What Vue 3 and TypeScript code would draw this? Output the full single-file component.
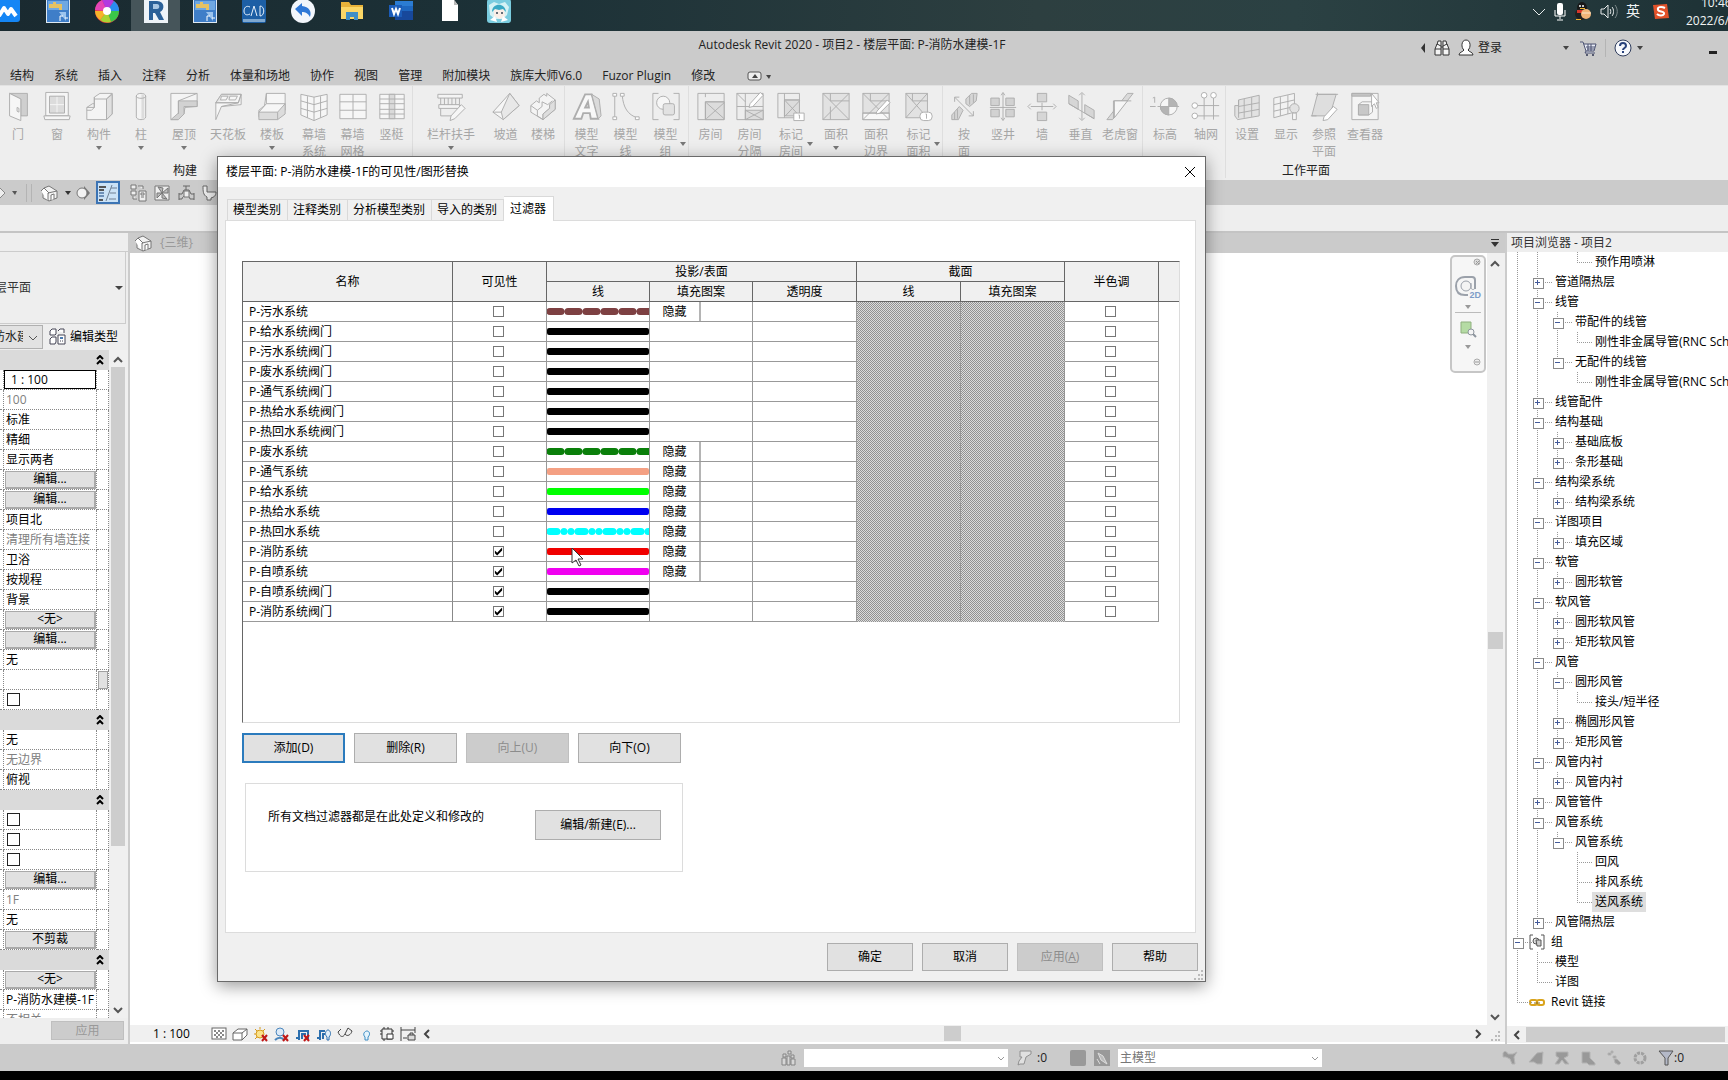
<script setup lang="ts">
import { ref } from 'vue'

interface Tool {
  icon: string
  w: number
  label: string[]
  drop?: 'below' | 'side'
}
interface Group {
  title?: string
  tools: Tool[]
}
interface Filter {
  name: string
  on: boolean
  color: string
  dash?: string
  hidden?: boolean
}
interface Prop {
  kind: 'input' | 'text' | 'muted' | 'button' | 'check' | 'more' | 'group'
  value?: string
}
interface Node {
  cells: string
  text: string
  icon?: 'group' | 'link'
  selected?: boolean
}

const menu = ['结构', '系统', '插入', '注释', '分析', '体量和场地', '协作', '视图', '管理', '附加模块', '族库大师V6.0', 'Fuzor Plugin', '修改']

const art: Record<string, string> = {
  door: '<path d="M7 2h19v24h-7V8z" fill="#cfcfcf"/><path d="M7 2l12 6v23L7 26z" fill="#f6f6f6"/><path d="M15 17v4l2 1v-4z"/>',
  window: '<path d="M4 1h24v25H4z" fill="#f6f6f6"/><path d="M2 26h28l-1 4H3z" fill="#f6f6f6"/><path d="M8 5h16v18H8z" fill="#dcdcdc" stroke="none"/><path d="M16 5v18M8 14h16" stroke="#f6f6f6"/><path d="M8 5h16v18H8z"/>',
  component: '<path d="M11 6l6-4h13v22l-6 6H3V17h8z" fill="#f4f4f4"/><path d="M3 17l6-4h2M11 6v11l-3 3H3M24 30V8l6-6M11 8h13" /><path d="M24 8l6-5v21l-6 6z" fill="#e0e0e0"/>',
  column: '<path d="M11 5c0-4 10-4 10 0v22c0 4-10 4-10 0z" fill="#f4f4f4"/><path d="M18 3v26" stroke="#dcdcdc" stroke-width="3"/><path d="M11 5c0 3 10 3 10 0"/>',
  roof: '<path d="M2 2h28v14l-13 1-1 7-7 6H2z" fill="#f4f4f4"/><path d="M2 30l8-7V10h20l0 6H16v8l-6 6z" fill="#d2d2d2"/><path d="M10 10l20-8M10 10v14"/>',
  ceiling: '<path d="M9 3h21v11L9 16l-6 14V12z" fill="#f6f6f6"/><path d="M3 12l6-9h21l-3 9zM3 12h24l3-9M9 16l18-4" fill="#e6e6e6"/><path d="M9 5h7l-2 4H8zM18 5h8l-2 4h-7z" fill="#f6f6f6"/>',
  floor: '<path d="M10 2h20v18l-8 7H2l0-7 6-5z" fill="#f6f6f6"/><path d="M2 22h20l8-9v11l-8 6H2z" fill="#dcdcdc"/><path d="M2 22l8-9h20M10 2v11M22 22v8"/>',
  curtain: '<path d="M2 3l14 3 14-3v22l-14 6L2 25z" fill="#f6f6f6"/><path d="M9 5v23M23 5v23M16 6v25M2 10l14 4 14-4M2 18l14 4 14-4"/>',
  grid: '<path d="M2 3h28v26H2z" fill="#f6f6f6"/><path d="M16 3v26M2 11h28M2 20h28"/>',
  mullion: '<path d="M3 3h26v26H3z" fill="#f6f6f6"/><path d="M13 3h6v26h-6z" fill="#dadada"/><path d="M3 8h26M3 13h26M3 19h26M3 24h26"/>',
  railing: '<path d="M2 3h26v4H2zM3 14h22v4H3z" fill="#f4f4f4"/><path d="M5 7v7M9 7v7M13 7v7M17 7v7M21 7v7M25 7v7M5 18v8h14"/><path d="M16 26l11-12 4 4-11 11-5 2z" fill="#f6f6f6"/>',
  ramp: '<path d="M2 22L20 2l10 13-17 15z" fill="#f6f6f6"/><path d="M20 2l10 13-17 15-2-8z" fill="#e8e8e8"/><path d="M2 22l9 0"/>',
  stair: '<path d="M3 15l6-5 3 2 0-5 5-4 3 2 0-3 9 7v10L16 30 3 22z" fill="#f4f4f4"/><path d="M3 15l7 5 5-4 0-5 6 3 5-4M10 20v6l6 4 0-6 7-6v-4" /><path d="M16 24l7-6v-4l6-5v10L16 30z" fill="#dedede"/>',
  text: '<path d="M2 29L14 3h7l7 26h-8l-1-6h-7l-2 6zM14 17h4l-1-6z" fill="#f8f8f8" stroke-width="2"/><path d="M21 3l8 5 2 18-3 3z" fill="#dadada"/>',
  line: '<path d="M4 4v24M12 4c1 13 6 21 16 24"/><path d="M2 2h4v3H2zM2 27h4v3H2zM10 2h4v3h-4zM26 27h4v3h-4z" fill="#fff"/>',
  group: '<path d="M8 2H2v28h6M24 2h6v28h-6"/><circle cx="13" cy="12" r="7" fill="#f6f6f6"/><rect x="13" y="13" width="12" height="12" rx="2" fill="#e2e2e2"/>',
  room: '<path d="M2 2h28v28H2z" fill="#ededed"/><path d="M10 11h20v19H10z" fill="#dcdcdc"/><path d="M10 2v4M10 11v19M10 11h20M11 12l19 17M30 12L11 29"/>',
  roomsep: '<path d="M2 2h28v28H2z" fill="#ededed"/><path d="M11 20h19v10H11z" fill="#dcdcdc"/><path d="M11 2v28M2 16h28M11 20l19 10M30 20L11 30M2 2l9 9"/><path d="M16 13L27 1l3 3-11 12-4 1z" fill="#fff"/>',
  tagroom: '<path d="M2 2h23v26H2z" fill="#ededed"/><path d="M9 9h16v17H9z" fill="#dcdcdc"/><path d="M9 2v26M9 9h16M10 10l15 16M25 10L10 26"/><path d="M19 23h11v8H19z" fill="#fff"/><path d="M24 25h1v4"/>',
  area: '<path d="M2 2h28v28H2z" fill="#e2e2e2"/><path d="M2 2l28 28M30 2L2 30M10 2v8h20M10 16v14"/>',
  areaedge: '<path d="M2 2h28v28H2z" fill="#e2e2e2"/><path d="M2 23h28v7H2z" fill="#f8f8f8"/><path d="M2 2l28 28M30 2L2 30M10 2v8h20M2 23h28"/><path d="M17 21L28 9l3 3-11 11-4 1z" fill="#fff"/>',
  tagarea: '<path d="M2 2h23v26H2z" fill="#e2e2e2"/><path d="M2 2l23 26M25 2L2 28M9 2v8h16"/><rect x="17" y="22" width="13" height="9" rx="4" fill="#fff"/><path d="M23 24h1v5"/>',
  face: '<path d="M3 25l8-9 4 4-5 10H3zM18 8l6-6h6l-1 8-7 6-4-3z" fill="#d6d6d6"/><path d="M6 6l20 20M6 6v5M6 6h5M26 26v-5M26 26h-5M6 22v8M9 19v10M22 4v10M26 3v9"/>',
  shaft: '<path d="M3 7h9v8H3zM19 7h9v8h-9zM3 19h9v8H3zM19 19h9v8h-9z" fill="#d2d2d2"/><path d="M16 2v28M2 17h28M14 4l2-3 2 3M14 28l2 3 2-3"/>',
  wall: '<path d="M11 2h10v9H11zM11 22h10v9H11z" fill="#d6d6d6"/><path d="M4 16h24M4 13l-3 3 3 3M28 13l3 3-3 3M16 12v8"/>',
  vertical: '<path d="M3 4l10 6v9L3 13zM20 14l10 6v9l-10-6z" fill="#d6d6d6"/><path d="M17 2v28M14 4l3-3 3 3M14 28l3 3 3-3M3 13l27 16"/>',
  dormer: '<path d="M2 30h6L30 2h-6z" fill="#dadada"/><path d="M9 29V10h19" /><path d="M10 10h14L10 28z" fill="#f6f6f6"/>',
  level: '<path d="M0 16h6M8 16h3M28 16h3M3 7l2-1v6"/><circle cx="20" cy="16" r="9" fill="#f6f6f6"/><path d="M20 7a9 9 0 0 1 9 9H11a9 9 0 0 0 9 9z" fill="#b4b4b4"/>',
  axis: '<path d="M14 6v24M24 6v24M6 15h24M6 26h24"/><circle cx="14" cy="4" r="3" fill="#fff"/><circle cx="24" cy="4" r="3" fill="#fff"/><circle cx="4" cy="15" r="3" fill="#fff"/><circle cx="4" cy="26" r="3" fill="#fff"/>',
  set: '<path d="M7 9l22-5v22L6 30l-3-4V15h4z" fill="#e2e2e2"/><path d="M13 8v20M21 6v21M7 16l22-4M7 23l22-4M7 9v19"/>',
  show: '<path d="M3 7l22-5v20L3 28z" fill="#f2f2f2"/><path d="M10 6v20M18 4v20M3 14l22-5M3 21l22-5"/><circle cx="25" cy="18" r="5" fill="#e2e2e2"/><path d="M23 23h4v7h-4z" fill="#f6f6f6"/>',
  refplane: '<path d="M9 3h20l-7 23H3z" fill="#dedede"/><path d="M7 3h24M9 1v4M2 26h6"/><path d="M16 27l10-11 4 3-10 11-5 1z" fill="#fff"/>',
  viewer: '<path d="M2 2h28v28H2z" fill="#f4f4f4"/><path d="M2 2h20v3H2z" fill="#c4c4c4"/><path d="M9 14l4-3h11v11l-4 3H9z" fill="#f6f6f6"/><path d="M9 14h11v11H9z" fill="#c8c8c8"/><path d="M23 2v14l3-3 2 5 2-1-2-5h3z" fill="#fff"/>',
}

const groups: Group[] = [
  {
    title: '构建',
    tools: [
      { icon: 'door', w: 36, label: ['门'] },
      { icon: 'window', w: 42, label: ['窗'] },
      { icon: 'component', w: 42, label: ['构件'], drop: 'below' },
      { icon: 'column', w: 42, label: ['柱'], drop: 'below' },
      { icon: 'roof', w: 44, label: ['屋顶'], drop: 'below' },
      { icon: 'ceiling', w: 44, label: ['天花板'] },
      { icon: 'floor', w: 44, label: ['楼板'], drop: 'below' },
      { icon: 'curtain', w: 40, label: ['幕墙', '系统'] },
      { icon: 'grid', w: 37, label: ['幕墙', '网格'] },
      { icon: 'mullion', w: 41, label: ['竖梃'] },
    ],
  },
  {
    tools: [
      { icon: 'railing', w: 76, label: ['栏杆扶手'], drop: 'below' },
      { icon: 'ramp', w: 33, label: ['坡道'] },
      { icon: 'stair', w: 42, label: ['楼梯'] },
    ],
  },
  {
    tools: [
      { icon: 'text', w: 43, label: ['模型', '文字'] },
      { icon: 'line', w: 35, label: ['模型', '线'] },
      { icon: 'group', w: 45, label: ['模型', '组'], drop: 'side' },
    ],
  },
  {
    tools: [
      { icon: 'room', w: 43, label: ['房间'] },
      { icon: 'roomsep', w: 35, label: ['房间', '分隔'] },
      { icon: 'tagroom', w: 48, label: ['标记', '房间'], drop: 'side' },
      { icon: 'area', w: 42, label: ['面积'], drop: 'below' },
      { icon: 'areaedge', w: 38, label: ['面积', '边界'] },
      { icon: 'tagarea', w: 47, label: ['标记', '面积'], drop: 'side' },
    ],
  },
  {
    tools: [
      { icon: 'face', w: 42, label: ['按', '面'] },
      { icon: 'shaft', w: 36, label: ['竖井'] },
      { icon: 'wall', w: 42, label: ['墙'] },
      { icon: 'vertical', w: 35, label: ['垂直'] },
      { icon: 'dormer', w: 44, label: ['老虎窗'] },
    ],
  },
  {
    tools: [
      { icon: 'level', w: 44, label: ['标高'] },
      { icon: 'axis', w: 38, label: ['轴网'] },
    ],
  },
  {
    title: '工作平面',
    tools: [
      { icon: 'set', w: 42, label: ['设置'] },
      { icon: 'show', w: 36, label: ['显示'] },
      { icon: 'refplane', w: 40, label: ['参照', '平面'] },
      { icon: 'viewer', w: 42, label: ['查看器'] },
    ],
  },
]

const props: Prop[] = [
  { kind: 'group' },
  { kind: 'input', value: '1 : 100' },
  { kind: 'muted', value: '100' },
  { kind: 'text', value: '标准' },
  { kind: 'text', value: '精细' },
  { kind: 'text', value: '显示两者' },
  { kind: 'button', value: '编辑...' },
  { kind: 'button', value: '编辑...' },
  { kind: 'text', value: '项目北' },
  { kind: 'muted', value: '清理所有墙连接' },
  { kind: 'text', value: '卫浴' },
  { kind: 'text', value: '按规程' },
  { kind: 'text', value: '背景' },
  { kind: 'button', value: '<无>' },
  { kind: 'button', value: '编辑...' },
  { kind: 'text', value: '无' },
  { kind: 'more' },
  { kind: 'check' },
  { kind: 'group' },
  { kind: 'text', value: '无' },
  { kind: 'muted', value: '无边界' },
  { kind: 'text', value: '俯视' },
  { kind: 'group' },
  { kind: 'check' },
  { kind: 'check' },
  { kind: 'check' },
  { kind: 'button', value: '编辑...' },
  { kind: 'muted', value: '1F' },
  { kind: 'text', value: '无' },
  { kind: 'button', value: '不剪裁' },
  { kind: 'group' },
  { kind: 'button', value: '<无>' },
  { kind: 'text', value: 'P-消防水建模-1F' },
  { kind: 'muted', value: '不相关' },
]

const LONG = '11 7'
const DASH_DOT = '7 7 0 7 0 7'
const filters = ref<Filter[]>([
  { name: 'P-污水系统', on: false, color: '#7d4042', dash: LONG, hidden: true },
  { name: 'P-给水系统阀门', on: false, color: '#000' },
  { name: 'P-污水系统阀门', on: false, color: '#000' },
  { name: 'P-废水系统阀门', on: false, color: '#000' },
  { name: 'P-通气系统阀门', on: false, color: '#000' },
  { name: 'P-热给水系统阀门', on: false, color: '#000' },
  { name: 'P-热回水系统阀门', on: false, color: '#000' },
  { name: 'P-废水系统', on: false, color: '#0a7f0a', dash: LONG, hidden: true },
  { name: 'P-通气系统', on: false, color: '#f4a083', hidden: true },
  { name: 'P-给水系统', on: false, color: '#0f0', hidden: true },
  { name: 'P-热给水系统', on: false, color: '#0000f0', hidden: true },
  { name: 'P-热回水系统', on: false, color: '#0ff', dash: DASH_DOT, hidden: true },
  { name: 'P-消防系统', on: true, color: '#f00000', hidden: true },
  { name: 'P-自喷系统', on: true, color: '#f000f0', hidden: true },
  { name: 'P-自喷系统阀门', on: true, color: '#000' },
  { name: 'P-消防系统阀门', on: true, color: '#000' },
])

// One character per 20px guide column:
// | line, T branch, L last branch, + - boxes, p m boxes on the last child
const tree: Node[] = [
  { cells: '|| L', text: '预作用喷淋' },
  { cells: '|+', text: '管道隔热层' },
  { cells: '|-', text: '线管' },
  { cells: '||-', text: '带配件的线管' },
  { cells: '|||L', text: '刚性非金属导管(RNC Sch' },
  { cells: '||m', text: '无配件的线管' },
  { cells: '|| L', text: '刚性非金属导管(RNC Sch' },
  { cells: '|+', text: '线管配件' },
  { cells: '|-', text: '结构基础' },
  { cells: '||+', text: '基础底板' },
  { cells: '||p', text: '条形基础' },
  { cells: '|-', text: '结构梁系统' },
  { cells: '||p', text: '结构梁系统' },
  { cells: '|-', text: '详图项目' },
  { cells: '||p', text: '填充区域' },
  { cells: '|-', text: '软管' },
  { cells: '||p', text: '圆形软管' },
  { cells: '|-', text: '软风管' },
  { cells: '||+', text: '圆形软风管' },
  { cells: '||p', text: '矩形软风管' },
  { cells: '|-', text: '风管' },
  { cells: '||-', text: '圆形风管' },
  { cells: '|||L', text: '接头/短半径' },
  { cells: '||+', text: '椭圆形风管' },
  { cells: '||p', text: '矩形风管' },
  { cells: '|-', text: '风管内衬' },
  { cells: '||p', text: '风管内衬' },
  { cells: '|+', text: '风管管件' },
  { cells: '|-', text: '风管系统' },
  { cells: '||m', text: '风管系统' },
  { cells: '|| T', text: '回风' },
  { cells: '|| T', text: '排风系统' },
  { cells: '|| L', text: '送风系统', selected: true },
  { cells: '|p', text: '风管隔热层' },
  { cells: '-', text: '组', icon: 'group' },
  { cells: '|T', text: '模型' },
  { cells: '|L', text: '详图' },
  { cells: 'L', text: 'Revit 链接', icon: 'link' },
]

const cellClass: Record<string, string> = {
  ' ': '', '|': 'v', T: 'v h', L: 'u h', '+': 'v h box plus', '-': 'v h box', p: 'u h box plus', m: 'u h box',
}

const redX = '<path d="M9 9l5 6M14 9l-5 6" stroke="#c01818" stroke-width="2"/>'
const viewIcons = [
  '<rect x="1" y="2" width="14" height="11" fill="#fff"/><path d="M3 4h2v2H3zM7 4h2v2H7zM11 4h2v2h-2zM5 6h2v2H5zM9 6h2v2H9zM3 8h2v2H3zM7 8h2v2H7zM11 8h2v2h-2zM5 10h2v2H5zM9 10h2v2H9z" fill="#888" stroke="none"/>',
  '<path d="M1 7l5-4h9v6l-5 5H1zM1 7h9v7M10 7l5-4" fill="#fff"/>',
  '<circle cx="7" cy="8" r="4" fill="#fbe38a" stroke="#d69a1c"/><path d="M7 1v2M1 8h2M2 3l2 2M12 3l-2 2M2 13l2-2" stroke="#d69a1c"/>' + redX,
  '<circle cx="6" cy="6" r="4" fill="#dceaf8" stroke="#4b86bd"/><path d="M1 14c3-3 7-3 9 0" stroke="#4b86bd" stroke-width="2"/>' + redX,
  '<path d="M1 12h3M4 14V5h9v8M7 13V8h4" stroke="#2c6fae" stroke-width="2"/>' + redX,
  '<path d="M1 12h3M4 14V5h5M7 13V8h2" stroke="#2c6fae" stroke-width="2"/><path d="M11 14h2v-3c3-3 1-7-1-7s-4 4-1 7z" fill="#e4f1fb" stroke="#2c6fae"/>',
  '<path d="M1 6c2 5 5 6 7 2 2 3 6 1 7-3M8 8l3-6 4 3M1 6l3-3" stroke="#444"/>',
  '<path d="M7 14h3v-3c3-3 1-6-1-6s-5 3-2 6z" fill="#e4f4fd" stroke="#3a8cc4"/>',
  '<path d="M3 3h10v10H3zM1 5h2M1 8h2M5 1v2M9 1v2M13 5h2M5 13v2" stroke="#333"/><path d="M8 8h6v5H8z" fill="#fff" stroke="#333"/>',
  '<path d="M1 1v14M15 1v6M1 4h14M3 12h4" stroke="#444"/><path d="M8 9h7v5H8zM10 9V7h3v2" fill="#ddd" stroke="#444"/>',
]
const statusIcons = [
  '<path d="M1 3c2-3 4-1 5 1h5l4-2-3 5 1 7h-3l-2-5-4-2-3 0z"/>',
  '<path d="M1 12l8-9 6-1-1 12H9l-3-2z"/>',
  '<path d="M2 2h12v4l-4 2 5 6h-4l-3-4-3 4H1l4-6-3-2z"/>',
  '<path d="M2 2h8v6l5 5v2H9l-2-2H2z"/>',
  '<path d="M2 3h3v2H2zM5 1h2v2H5zM7 6h3v2H7zM8 9h3l4 4-2 2-4-2z"/>',
]
</script>

<template>
  <div class="screen">
    <header class="taskbar">
      <div class="apps">
        <span class="app"><svg viewBox="0 0 24 24"><rect y="-2" width="24" height="24" rx="3" fill="#1586f5" /><path d="M3 16l5-8 4 6 3-5 5 7" fill="none" stroke="#fff" stroke-width="4" stroke-linejoin="round" /></svg></span>
        <span class="app"><svg viewBox="0 0 24 24"><path d="M0 0h24v23H0z" fill="#dfe9f2" /><path d="M1 0h22v22H1z" fill="#3f7ec8" /><path d="M2 1h20v9H2z" fill="#6fa8e2" /><path d="M3 4h4V2h3v2h6v6h-3V8H3z" fill="#e5c263" /><path d="M13 12l7 9v-9z" fill="#9cc4ee" /><path d="M14 21v-5h3M19 18h3" fill="none" stroke="#fff" /></svg></span>
        <span class="app"><svg viewBox="0 0 24 24"><circle cx="12" cy="11" r="12" fill="#ef3d3d" /><path d="M12 11L0 10a12 12 0 0 1 7-10z" fill="#e545b8" /><path d="M12 11L7 0a12 12 0 0 1 12 1z" fill="#b23be0" /><path d="M12 11l7-10a12 12 0 0 1 5 10z" fill="#2a8df0" /><path d="M12 11h12a12 12 0 0 1-8 11z" fill="#3ac74a" /><path d="M12 11l4 11a12 12 0 0 1-11-2z" fill="#a9d432" /><path d="M12 11L5 20a12 12 0 0 1-5-9z" fill="#f7b42a" /><circle cx="12" cy="11" r="4" fill="#fff" /></svg></span>
        <span class="app active"><svg viewBox="0 0 24 24"><path d="M0 0h24v23H0z" fill="#eef3f8" /><path d="M5 1h8c8 0 8 9 3 11l4 8h-5l-4-7H9v7H5z" fill="#2b6098" /><path d="M9 4h4c3 0 3 5 0 5H9z" fill="#a9c6e2" /></svg></span>
        <span class="app"><svg viewBox="0 0 24 24"><path d="M0 0h24v23H0z" fill="#dfe9f2" /><path d="M1 0h22v22H1z" fill="#3f7ec8" /><path d="M2 1h20v9H2z" fill="#6fa8e2" /><path d="M3 4h4V2h3v2h6v6h-3V8H3z" fill="#e5c263" /><path d="M13 12l7 9v-9z" fill="#9cc4ee" /><path d="M14 21v-5h3M19 18h3" fill="none" stroke="#fff" /></svg></span>
        <span class="app"><svg viewBox="0 0 24 24"><rect y="-1" width="24" height="24" rx="2" fill="#1d5fa5" /><path d="M1 19h22v3H1z" fill="#7fa8cf" /><path d="M8 7c-4-2-6 1-6 4s2 5 6 3M9 16l3-10 3 10M18 6v10c5 0 5-10 0-10" fill="none" stroke="#e8f2fb" /></svg></span>
        <span class="app"><svg viewBox="0 0 24 24"><circle cx="12" cy="11" r="12" fill="#f2f6fb" /><path d="M4 9l7-6v3c7 1 10 5 8 11-2-4-5-5-8-5v4z" fill="#2f78d6" /></svg></span>
        <span class="app"><svg viewBox="0 0 24 24"><path d="M1 2h8l2 3h12v14H1z" fill="#e8b33a" /><path d="M1 7h22v12H1z" fill="#fbd766" /><path d="M6 12h12v8h-4v-3h-4v3H6z" fill="#3f8fc6" /></svg></span>
        <span class="app"><svg viewBox="0 0 24 24"><path d="M6 1h18v19H6z" fill="#2b7cd3" /><path d="M6 6h18v5H6z" fill="#1e67c0" /><path d="M6 11h18v9H6z" fill="#17489b" /><path d="M0 5h13v12H0z" fill="#1b5cb8" /><path d="M3 8l2 6 2-5 2 5 2-6" fill="none" stroke="#fff" stroke-width="2" /></svg></span>
        <span class="app"><svg viewBox="0 0 24 24"><path d="M4 0h12l4 5v16H4z" fill="#fff" /><path d="M16 0v5h4z" fill="#b9b9b9" /></svg></span>
        <span class="app"><svg viewBox="0 0 24 24"><rect y="-1" width="24" height="24" rx="3" fill="#7accdf" /><path d="M2 5l5-3 5 2 6-2 4 5-2 8-4 4H8l-5-4z" fill="#d5f2f5" /><path d="M7 8c3-4 9-3 10 2l1 6-5 3-6-3z" fill="#fbeee6" /><path d="M5 12c0-9 13-10 14 0l-3-3-4 1-4-1z" fill="#3aa9c4" /><circle cx="10" cy="13" r="1" fill="#345" /><circle cx="15" cy="13" r="1" fill="#345" /><path d="M3 20l5-4 2 6zM21 20l-5-4-2 6z" fill="#fff" /></svg></span>
      </div>
      <div class="tray">
        <svg width="14" height="20" viewBox="0 0 14 20"><path d="M1 8l6 6 6-6" fill="none" stroke="#e8ecec" /></svg>
        <svg width="12" height="20" viewBox="0 0 12 20"><rect x="3" y="2" width="6" height="12" rx="2" fill="#fff" /><path d="M1 9v6h10V9M6 15v3M3 19h6" fill="none" stroke="#fff" /></svg>
        <svg width="18" height="20" viewBox="0 0 18 20"><ellipse cx="8" cy="7" rx="5" ry="6" fill="#181818" /><ellipse cx="8" cy="13" rx="7" ry="6" fill="#20201f" /><path d="M3 9h10v3H3z" fill="#d6352a" /><circle cx="12" cy="13" r="5" fill="#f0b478" /><path d="M8 12h9" stroke="#fbe6cc" /><circle cx="6" cy="5" r="1" fill="#fff" /><circle cx="9" cy="5" r="1" fill="#fff" /><path d="M6 7h5v1H6zM2 18h5v1H2z" fill="#efb32e" /></svg>
        <svg width="18" height="20" viewBox="0 0 18 20"><path d="M1 8h3l4-4v13l-4-4H1z" fill="none" stroke="#e8ecec" /><path d="M10 8c1 1 1 4 0 5M12 6c2 2 2 7 0 9" fill="none" stroke="#e8ecec" /><path d="M15 4c3 4 3 9 0 13" fill="none" stroke="#7d8a8c" /></svg>
        <span class="ime">英</span>
        <svg width="18" height="20" viewBox="0 0 18 20"><path d="M1 4l14-1 2 14-14 1z" fill="#e2522a" /><path d="M13 7c-4-2-8-1-7 2 1 2 7 1 6 4-1 2-5 2-7 0" fill="none" stroke="#fff" stroke-width="2" /></svg>
        <div class="clock"><span class="time">10:46</span><span>2022/6/</span></div>
      </div>
    </header>

    <div class="titlebar">
      <h1>Autodesk Revit 2020 - 项目2 - 楼层平面: P-消防水建模-1F</h1>
      <div class="account">
        <svg width="6" height="10" viewBox="0 0 6 10"><path d="M5 0v10L1 5z" fill="#333" /></svg>
        <svg width="16" height="18" viewBox="0 0 16 18"><g fill="#f4f4f4" stroke="#333"><path d="M3 6l1-4h3v5M13 6l-1-4H9v5" /><path d="M1 10h6v6H1zM9 10h6v6H9zM1 10l2-5 4 2v3M15 10l-2-5-4 2v3M7 8h2" /></g></svg>
        <svg width="16" height="18" viewBox="0 0 16 18"><path d="M8 1c5 0 5 8 2 10 1 2 5 2 5 5H1c0-3 4-3 5-5C3 9 3 1 8 1z" fill="#fff" stroke="#333" /></svg>
        <button class="login">登录</button>
        <i class="tri"></i>
        <svg class="cart" width="17" height="17" viewBox="0 0 17 17"><path d="M0 2h3l3 9h8l2-7H4M6 11l-1 2h10" fill="#e8ecf6" stroke="#4a5170" /><path d="M6 7h9M7 9h7M8 4v7M11 4v7" stroke="#4a5170" /><circle cx="7" cy="15" r="1" fill="#2d3350" /><circle cx="13" cy="15" r="1" fill="#2d3350" /></svg>
        <i class="bar"></i>
        <svg width="18" height="18" viewBox="0 0 18 18"><circle cx="9" cy="9" r="8" fill="#f6f8fc" stroke="#2f3c5c" /><path d="M6 7c0-4 6-4 6 0 0 2-3 2-3 4M9 12v2" fill="none" stroke="#28427c" stroke-width="2" /></svg>
        <i class="tri help"></i>
        <button class="minimize" aria-label="最小化"></button>
      </div>
    </div>

    <nav class="menu">
      <a v-for="m in menu" :key="m" href="#">{{ m }}</a>
      <svg width="26" height="12" viewBox="0 0 26 12"><rect x="1" y="2" width="13" height="8" rx="2" fill="#eee" stroke="#555" /><path d="M5 8l3-4 3 4zM19 5h5l-2 4z" fill="#444" /></svg>
    </nav>

    <div class="ribbon">
      <section v-for="(g, gi) in groups" :key="gi" class="rgroup" :class="{ first: gi === 0 }">
        <div class="tools">
          <button v-for="t in g.tools" :key="t.icon" class="tool" :style="{ width: t.w + 'px' }" disabled>
            <svg width="30" height="31" viewBox="0 0 32 32" fill="none" stroke="#adadad" stroke-width="1" v-html="art[t.icon]"></svg>
            <span v-for="l in t.label" :key="l">{{ l }}</span>
            <i v-if="t.drop" class="tri" :class="t.drop"></i>
          </button>
        </div>
        <h2 v-if="g.title">{{ g.title }}</h2>
      </section>
    </div>

    <div class="quick">
      <svg class="tag" width="22" height="20" viewBox="0 0 22 20"><path d="M0 5l5 5-5 5" fill="#eee" stroke="#888" /><path d="M12 8h5l-2 4z" fill="#555" /></svg>
      <i class="bar"></i><i class="bar"></i>
      <svg class="home" width="34" height="20" viewBox="0 0 34 20"><path d="M1 8l3-3 5-2 8 5v7l-8 3-6-3V9z" fill="#f2f2f2" stroke="#777" /><path d="M1 8l3-3 5 5-1 0v8M8 10l9-2M11 17v-5l3-1v5" fill="#fff" stroke="#777" /><path d="M25 8h6l-3 4z" fill="#333" /></svg>
      <svg width="16" height="20" viewBox="0 0 16 20"><path d="M8 3l6 7-6 7z" fill="#777" /><circle cx="6" cy="10" r="5" fill="#f2f2f2" stroke="#777" /></svg>
      <button class="on" aria-label="细线"><svg width="20" height="20" viewBox="0 0 20 20"><path d="M1 4h7M1 7h5" stroke="#555" stroke-width="2" /><path d="M1 10h5M1 13h5" stroke="#6e90b8" stroke-width="2" /><path d="M1 17h4" stroke="#555" stroke-width="2" /><path d="M14 2L8 18M13 5h6M12 10h6M11 16h7" stroke="#6f7f92" /></svg></button>
      <div class="quick-more">
        <svg width="17" height="20" viewBox="0 0 17 20"><path d="M1 2h5v4H1zM1 8h5v4H1zM8 3h5v3M3 13v3h4" fill="#eee" stroke="#777" /><path d="M9 8h7v10H9zM11 10h3v2h-3zM11 14h3" fill="#eee" stroke="#777" /></svg>
        <svg width="17" height="20" viewBox="0 0 17 20"><path d="M1 3h14v14H1z" fill="#eee" stroke="#777" /><path d="M8 10L4 4l5 1zM8 10l6-5v5zM8 10l5 6-5-1zM8 10l-5 5v-5z" fill="#bbb" stroke="#777" /></svg>
        <svg width="17" height="20" viewBox="0 0 17 20"><path d="M5 3h7M8 3v4M1 10v7M16 10v7M1 11h3l2-4h5l2 4h3M1 16h3c0-4 8-4 8 0h4" fill="none" stroke="#666" /><path d="M6 8h5v6H6z" fill="#eee" stroke="#777" /></svg>
        <svg width="17" height="20" viewBox="0 0 17 20"><path d="M1 3h4v6h9c0 4-2 5-5 6v2H5v-3C1 12 1 8 1 3z" fill="#eee" stroke="#666" /></svg>
      </div>
    </div>
    <div class="options"></div>

    <main class="work">
      <aside class="properties">
        <div class="palette-head"></div>
        <div class="type"><span>层平面</span><i class="tri"></i></div>
        <div class="instance">
          <div class="combo">
            <select aria-label="实例"><option>防水建模</option></select>
            <svg width="10" height="8" viewBox="0 0 10 8"><path d="M1 2l4 4 4-4" fill="none" stroke="#555" /></svg>
          </div>
          <button class="edit-type">
            <svg width="17" height="17" viewBox="0 0 17 17"><g fill="#fff" stroke="#445"><path d="M1 3l2-2h4v5l-1 1H1zM9 3l2-2h4v4M1 11l2-2h4v5l-1 2H1z" /><path d="M9 7h7v9H9z" /></g><path d="M11 9h3v2h-3z" fill="#4a7ab0" /><path d="M11 13h1M13 13h1" stroke="#445" /></svg>编辑类型
          </button>
        </div>
        <div class="prop-area">
          <div class="prop-clip">
            <table class="props">
              <colgroup><col class="k"><col class="val"><col class="act"></colgroup>
              <tbody>
                <tr v-for="(p, i) in props" :key="i">
                  <td v-if="p.kind === 'group'" colspan="3" class="ghead">
                    <svg width="8" height="11" viewBox="0 0 8 11"><path d="M1 4l3-3 3 3M1 9l3-3 3 3" fill="none" stroke="#000" stroke-width="2" /></svg>
                  </td>
                  <template v-else>
                    <td></td>
                    <td class="cell-val" :class="p.kind">
                      <input v-if="p.kind === 'input'" :value="p.value" aria-label="视图比例">
                      <button v-else-if="p.kind === 'button'">{{ p.value }}</button>
                      <input v-else-if="p.kind === 'check'" type="checkbox" aria-label="启用">
                      <span v-else>{{ p.value }}</span>
                    </td>
                    <td class="cell-act"><button v-if="p.kind === 'more'" aria-label="浏览"></button></td>
                  </template>
                </tr>
              </tbody>
            </table>
          </div>
          <div class="vscroll">
            <svg width="10" height="8" viewBox="0 0 10 8"><path d="M1 6l4-4 4 4" fill="none" stroke="#555" stroke-width="2" /></svg>
            <i class="thumb"></i>
            <svg width="10" height="8" viewBox="0 0 10 8"><path d="M1 2l4 4 4-4" fill="none" stroke="#555" stroke-width="2" /></svg>
          </div>
        </div>
        <div class="apply"><button disabled>应用</button></div>
      </aside>

      <section class="view">
        <div class="doc-tabs">
          <svg width="18" height="20" viewBox="0 0 18 20"><path d="M1 8l3-3 5-2 8 5v7l-8 3-6-3V9z" fill="#f2f2f2" stroke="#777" /><path d="M1 8l3-3 5 5-1 0v8M8 10l9-2M11 17v-5l3-1v5" fill="#fff" stroke="#777" /></svg>
          <span>{三维}</span>
          <svg class="more" width="10" height="8" viewBox="0 0 10 8"><path d="M1 0h8v1H1zM1 3h8L5 8z" fill="#333" /></svg>
        </div>
        <div class="canvas">
          <div class="navbar">
            <svg class="end" width="9" height="9" viewBox="0 0 9 9"><circle cx="4" cy="4" r="3" fill="#ddd" stroke="#aaa" /><path d="M3 3l3 3M6 3L3 6" stroke="#999" /></svg>
            <svg width="26" height="26" viewBox="0 0 26 26"><path d="M20 14V5c0-2-1-3-3-3h-7C4 2 1 6 1 11c0 6 3 9 9 9h3" fill="none" stroke="#9ba1aa" stroke-width="2" /><circle cx="11" cy="11" r="5" fill="#f4f4f4" stroke="#9ba1aa" /><path d="M16 8v5c1 2 3 2 4 0" fill="none" stroke="#9ba1aa" /></svg>
            <b>2D</b>
            <i class="tri"></i>
            <hr>
            <svg class="zoom" width="18" height="18" viewBox="0 0 18 18"><path d="M2 2h10v11H2z" fill="#b5dba4" stroke="#8fb07f" /><circle cx="12" cy="12" r="3" fill="#f4f4f4" stroke="#8d959e" /><path d="M14 14l3 3" stroke="#8d959e" stroke-width="2" /></svg>
            <i class="tri"></i>
            <svg class="end low" width="9" height="9" viewBox="0 0 9 9"><circle cx="4" cy="4" r="3" fill="#eee" stroke="#aaa" /><path d="M2 4h4" stroke="#999" /></svg>
          </div>
          <div class="vscroll">
            <svg width="10" height="8" viewBox="0 0 10 8"><path d="M1 6l4-4 4 4" fill="none" stroke="#555" stroke-width="2" /></svg>
            <i class="thumb"></i>
            <svg width="10" height="8" viewBox="0 0 10 8"><path d="M1 2l4 4 4-4" fill="none" stroke="#555" stroke-width="2" /></svg>
          </div>
        </div>
        <div class="viewbar">
          <span class="scale">1 : 100</span>
          <svg v-for="(v, i) in viewIcons" :key="i" width="16" height="16" viewBox="0 0 16 16" fill="none" stroke="#666" v-html="v"></svg>
          <svg class="prev" width="8" height="10" viewBox="0 0 8 10"><path d="M6 1L2 5l4 4" fill="none" stroke="#444" stroke-width="2" /></svg>
          <div class="track"><i class="thumb"></i></div>
          <svg width="8" height="10" viewBox="0 0 8 10"><path d="M2 1l4 4-4 4" fill="none" stroke="#444" stroke-width="2" /></svg>
          <svg class="grip" width="10" height="10" viewBox="0 0 10 10"><path d="M7 0h2v2H7zM7 4h2v2H7zM7 8h2v2H7zM4 4h2v2H4zM4 8h2v2H4zM0 8h2v2H0z" fill="#bbb" /></svg>
        </div>
      </section>

      <aside class="browser">
        <h2>项目浏览器 - 项目2</h2>
        <ul class="tree">
          <li v-for="(n, i) in tree" :key="i">
            <i v-for="(c, k) in n.cells.split('')" :key="k" class="cell" :class="cellClass[c]"></i>
            <svg v-if="n.icon === 'group'" class="root" width="16" height="16" viewBox="0 0 16 16" fill="none" stroke="#555"><path d="M4 1H1v14h3M12 1h3v14h-3" /><circle cx="7" cy="7" r="3" fill="#ddd" /><path d="M7 6h5v6H8z" fill="#ccc" /></svg>
            <svg v-else-if="n.icon === 'link'" class="root" width="16" height="16" viewBox="0 0 16 16" fill="none" stroke="#d9a31c" stroke-width="2"><rect x="1" y="6" width="7" height="5" rx="2" /><rect x="8" y="6" width="7" height="5" rx="2" /><path d="M5 9h6" stroke="#8a6a18" stroke-width="1" /></svg>
            <span :class="{ root: n.icon, selected: n.selected }">{{ n.text }}</span>
          </li>
        </ul>
        <div class="hscroll">
          <svg width="8" height="10" viewBox="0 0 8 10"><path d="M6 1L2 5l4 4" fill="none" stroke="#444" stroke-width="2" /></svg>
          <i class="thumb"></i>
        </div>
      </aside>
    </main>

    <footer class="status">
      <div class="sets">
        <svg width="16" height="16" viewBox="0 0 16 16" fill="#d6d6d6" stroke="#858585"><path d="M8 1h3v3H8zM3 4h3v3H3zM11 5h3v3h-3z" /><path d="M2 8h4v7H2zM7 6h3v9H7zM11 9h4v6h-4z" /></svg>
        <div class="field"><select aria-label="工作集"><option></option></select><svg width="8" height="6" viewBox="0 0 8 6"><path d="M1 1l3 3 3-3" fill="none" stroke="#999" /></svg></div>
        <svg width="16" height="16" viewBox="0 0 16 16" fill="#e0e0e0" stroke="#909090"><path d="M4 1h11v3l-5 3-2 7H4l-2 1 1-4 3-4H4z" /></svg>
        <span class="count">:0</span>
        <svg width="16" height="16" viewBox="0 0 16 16"><rect width="16" height="16" rx="2" fill="#999" /></svg>
        <svg width="16" height="16" viewBox="0 0 16 16"><rect width="16" height="16" fill="#999" /><path d="M4 3l5 3 4 8-6-4zM3 9l3 5" fill="#bbb" stroke="#ddd" /></svg>
        <div class="field"><select aria-label="设计选项"><option>主模型</option></select><svg width="8" height="6" viewBox="0 0 8 6"><path d="M1 1l3 3 3-3" fill="none" stroke="#999" /></svg></div>
      </div>
      <div class="picks">
        <svg v-for="(s, i) in statusIcons" :key="i" width="16" height="16" viewBox="0 0 16 16" fill="#999" stroke="#b4b4b4" v-html="s"></svg>
        <svg width="16" height="16" viewBox="0 0 16 16"><circle cx="8" cy="8" r="5" fill="none" stroke="#a0a0a0" stroke-width="3" stroke-dasharray="3 1" /></svg>
        <svg width="16" height="16" viewBox="0 0 16 16"><path d="M1 1h14l-5 7v7H7V8z" fill="#b4b9c8" stroke="#555" /></svg>
      </div>
      <span class="total">:0</span>
    </footer>
    <div class="edge"></div>

    <div class="dialog" role="dialog" aria-labelledby="dlg-title">
      <div class="dlg-title">
        <h2 id="dlg-title">楼层平面: P-消防水建模-1F的可见性/图形替换</h2>
        <button aria-label="关闭"><svg width="12" height="12" viewBox="0 0 12 12"><path d="M1 1l10 10M11 1L1 11" stroke="#000" /></svg></button>
      </div>
      <div class="tabs">
        <button>模型类别</button><button>注释类别</button><button>分析模型类别</button><button>导入的类别</button><button class="current">过滤器</button>
      </div>
      <div class="pane">
        <div class="list">
          <table>
            <colgroup>
              <col class="c-name"><col class="c-flag"><col class="c-proj"><col class="c-proj"><col class="c-cut"><col class="c-cut"><col class="c-cut"><col class="c-flag"><col>
            </colgroup>
            <thead>
              <tr>
                <th rowspan="2">名称</th>
                <th rowspan="2">可见性</th>
                <th colspan="3">投影/表面</th>
                <th colspan="2">截面</th>
                <th rowspan="2">半色调</th>
                <th rowspan="2" class="tail"></th>
              </tr>
              <tr><th>线</th><th>填充图案</th><th>透明度</th><th>线</th><th>填充图案</th></tr>
            </thead>
            <tbody>
              <tr v-for="f in filters" :key="f.name">
                <td class="name">{{ f.name }}</td>
                <td class="flag"><input v-model="f.on" type="checkbox" :aria-label="f.name + '可见性'"></td>
                <td class="stroke">
                  <svg width="102" height="7" viewBox="0 0 102 7">
                    <line v-if="f.dash" x1="3" y1="3.5" x2="102" y2="3.5" :stroke="f.color" stroke-width="7" stroke-linecap="round" :stroke-dasharray="f.dash" />
                    <rect v-else width="102" height="7" rx="2" :fill="f.color" />
                  </svg>
                </td>
                <td class="pattern"><span v-if="f.hidden">隐藏</span></td>
                <td></td>
                <td class="cut"></td>
                <td class="cut"></td>
                <td class="flag"><input type="checkbox" :aria-label="f.name + '半色调'"></td>
                <td class="tail"></td>
              </tr>
            </tbody>
          </table>
        </div>
        <div class="row">
          <button class="btn primary">添加(D)</button>
          <button class="btn">删除(R)</button>
          <button class="btn" disabled>向上(U)</button>
          <button class="btn">向下(O)</button>
        </div>
        <div class="note">
          <p>所有文档过滤器都是在此处定义和修改的</p>
          <button class="btn">编辑/新建(E)...</button>
        </div>
      </div>
      <div class="foot">
        <button class="btn">确定</button>
        <button class="btn">取消</button>
        <button class="btn" disabled>应用(<u>A</u>)</button>
        <button class="btn">帮助</button>
      </div>
      <svg class="corner" width="10" height="10" viewBox="0 0 10 10"><path d="M7 0h2v2H7zM7 4h2v2H7zM7 8h2v2H7zM4 4h2v2H4zM4 8h2v2H4zM0 8h2v2H0z" fill="#bbb" /></svg>
      <svg class="pointer" width="13" height="20" viewBox="0 0 13 20"><path d="M1 1v15l4-3 3 6 2-1-3-6h5z" fill="#fff" stroke="#333" /></svg>
    </div>
  </div>
</template>

<style>
html, body { margin: 0; background: #000; }
</style>

<style scoped>
* { box-sizing: border-box; }
.screen {
  position: relative;
  display: flex;
  flex-direction: column;
  height: 100vh;
  overflow: hidden;
  background: #cbcbcb;
  color: #222;
  font: 12px/16px "Open Sans", "Noto Sans CJK SC", sans-serif;
}
h1, h2, p, ul { margin: 0; padding: 0; font: inherit; list-style: none; }
button, input, select { margin: 0; padding: 0; border: 0; background: none; font: inherit; color: inherit; }
select { appearance: none; border-radius: 0; }
svg { display: block; flex: none; }
a { color: inherit; text-decoration: none; }
.tri { flex: none; width: 0; height: 0; border: 3px solid transparent; border-top: 4px solid #444; border-bottom: 0; }
.bar { flex: none; width: 1px; height: 18px; background: #b4b4b4; }

/* Taskbar */
.taskbar { display: flex; flex: none; justify-content: space-between; height: 31px; background: linear-gradient(90deg, #1a2a30, #1c3137 30%, #2d3f40 60%, #2b4143 75%, #1e3236); }
.apps { display: flex; margin-left: -17px; }
.app { display: flex; justify-content: center; width: 49px; height: 31px; }
.app:first-child { width: 50px; }
.app.active { background: #46555a; }
.app svg { width: 24px; height: 24px; }
.tray { display: flex; align-items: flex-start; gap: 8px; color: #f2f4f4; }
.tray > svg { margin-top: 1px; }
.ime { width: 18px; font-size: 14px; line-height: 22px; }
.clock { display: flex; flex-direction: column; width: 42px; margin-left: 8px; overflow: hidden; white-space: nowrap; line-height: 18px; }
.time { margin-top: -6px; padding-left: 15px; }

/* Title and menu */
.titlebar { display: flex; flex: none; justify-content: flex-end; align-items: center; position: relative; height: 34px; }
.titlebar h1 { position: absolute; left: 0; right: 0; top: 6px; padding-right: 24px; text-align: center; font-size: 12px; }
.account { display: flex; align-items: center; gap: 8px; }
.login { width: 77px; margin-left: -4px; text-align: left; }
.cart { margin-left: 3px; }
.tri.help { margin-left: -3px; }
.minimize { width: 8px; height: 3px; margin: 8px 11px 0 58px; background: #222; }
.menu { display: flex; flex: none; align-items: center; gap: 20px; height: 20px; padding: 2px 0 0 10px; white-space: nowrap; }
.menu svg { margin-left: 12px; }

/* Ribbon */
.ribbon { display: flex; flex: none; height: 95px; background: #eee; border-top: 1px solid #e2e2e2; }
.rgroup { display: flex; flex-direction: column; border-right: 1px solid #dedede; margin-bottom: 2px; }
.rgroup:last-child { border: 0; }
.rgroup h2 { margin-top: auto; text-align: center; line-height: 14px; }
.rgroup.first h2 { padding-right: 42px; }
.tools { display: flex; height: 76px; }
.tool { position: relative; display: flex; flex-direction: column; align-items: center; padding-top: 5px; color: #a6a6a6; white-space: nowrap; line-height: 17px; }
.tool svg { margin-bottom: 4px; }
.tri.below { margin-top: 3px; border-top-color: #777; }
.tri.side { position: absolute; right: 2px; top: 56px; border-top-color: #777; }

.quick { display: flex; flex: none; align-items: center; gap: 4px; height: 25px; }
.quick .on { display: flex; align-items: center; justify-content: center; width: 24px; height: 23px; border: 2px solid #3c74b4; background: #cbe2f6; }
.quick .home { margin-left: 4px; margin-right: -2px; }
.quick-more { display: flex; gap: 7px; margin-left: 6px; }
.options { flex: none; height: 26px; background: #eee; }

/* Work area */
.work { display: flex; flex: 1; min-height: 0; border-top: 2px solid #c4c4c4; }
.vscroll { display: flex; flex-direction: column; align-items: center; justify-content: space-between; background: #f0f0f0; }
.properties { display: flex; flex-direction: column; flex: none; width: 130px; background: #eee; border-right: 2px solid #ccc; }
.palette-head { flex: none; height: 19px; border-bottom: 1px solid #ccc; }
.type { display: flex; flex: none; align-items: center; justify-content: space-between; height: 72px; margin-right: 2px; padding-right: 2px; border: solid #ccc; border-width: 0 1px 1px 0; color: #333; }
.type span { margin-left: -5px; }
.type .tri { border-width: 4px 4px 0; }
.instance { display: flex; flex: none; align-items: center; height: 26px; padding-bottom: 1px; }
.combo { position: relative; width: 43px; height: 24px; overflow: hidden; border: solid #b0b0b0; border-width: 1px 1px 1px 0; background: #e2e2e2; }
.combo select { width: 60px; height: 22px; margin-left: -17px; padding: 0 20px 0 10px; overflow: hidden; }
.combo svg { position: absolute; right: 4px; top: 8px; }
.edit-type { display: flex; align-items: center; gap: 4px; margin-left: 6px; color: #000; white-space: nowrap; line-height: 14px; }
.prop-area { display: flex; flex: 1; min-height: 0; }
.prop-clip { width: 109px; overflow: hidden; background: #fff; }
.props { width: 109px; table-layout: fixed; border-collapse: separate; border-spacing: 0; color: #000; }
.props .k { width: 4px; }
.props .val { width: 93px; }
.props .act { width: 12px; }
.props tr { height: 20px; }
.props td { height: 20px; padding: 0; overflow: hidden; white-space: nowrap; line-height: 16px; border-bottom: 1px dotted #888; border-right: 1px dotted #888; }
.props td.ghead { background: #dadada; border: 0; }
.ghead svg { margin-left: 96px; }
.cell-val span { padding-left: 2px; }
.cell-val.muted { color: #808080; }
.cell-val.input input { display: block; width: 92px; height: 19px; padding-left: 6px; border: 1px solid #000; background: #fff; }
.cell-val button { display: block; width: 91px; height: 18px; margin-left: 1px; border: 1px solid #aaa; border-right-width: 2px; border-bottom-width: 2px; background: #e1e1e1; line-height: 14px; }
.cell-act button { display: block; width: 10px; height: 18px; margin-left: 1px; border: 1px solid #a0a0a0; background: #e1e1e1; }
.cell-val.check input { appearance: none; display: block; width: 13px; height: 13px; margin-left: 3px; border: 1px solid #222; }
.prop-area .vscroll { width: 19px; padding: 6px 2px 4px 0; }
.prop-area .thumb { width: 14px; flex: 0 0 479px; margin: 3px 0 auto; background: #cdcdcd; }
.apply { display: flex; flex: none; justify-content: flex-end; height: 26px; padding: 3px 4px 0 0; }
.apply button { width: 73px; height: 19px; border: 1px solid #bfbfbf; background: #ccc; color: #999; line-height: 16px; }

.view { display: flex; flex: 1; flex-direction: column; min-width: 0; background: #fff; }
.doc-tabs { display: flex; flex: none; align-items: center; height: 20px; padding: 0 5px 0 4px; background: #cbcbcb; color: #999; }
.doc-tabs span { margin-left: 8px; }
.doc-tabs .more { margin-left: auto; }
.canvas { display: flex; flex: 1; justify-content: flex-end; min-height: 0; }
.navbar { display: flex; flex-direction: column; align-items: center; width: 36px; height: 118px; margin: 2px 1px 0 0; border: 2px solid #c6c6c6; border-radius: 5px; background: #f6f6f6; }
.navbar .end { align-self: flex-end; margin: 1px 2px 8px 0; }
.navbar .end.low { margin: 9px 2px 0 0; }
.navbar .zoom { margin-bottom: 6px; }
.navbar b { align-self: flex-end; margin: -11px 3px 4px 0; color: #7d9cc8; font: bold 9px/10px "Liberation Sans", sans-serif; }
.navbar hr { width: 26px; height: 1px; margin: 3px 0 7px; border: 0; background: #bbb; }
.navbar .tri { border-top-color: #999; margin-top: 1px; }
.canvas .vscroll { width: 18px; padding: 7px 2px 4px 0; }
.canvas .thumb { width: 15px; height: 17px; background: #cdcdcd; }
.viewbar { display: flex; flex: none; align-items: center; height: 17px; margin-bottom: 2px; padding-left: 23px; background: #f0f0f0; color: #000; }
.viewbar .scale { width: 58px; }
.viewbar > svg { margin-right: 5px; }
.viewbar .prev { margin-left: 2px; }
.track { display: flex; flex: 1; justify-content: center; margin-right: 5px; }
.track .thumb { width: 17px; height: 15px; background: #cdcdcd; }
.viewbar .grip { margin: 4px 4px 0; }

.browser { display: flex; flex-direction: column; flex: none; width: 223px; overflow: hidden; background: #fff; border-left: 2px solid #ccc; }
.browser h2 { flex: none; height: 19px; padding-left: 4px; background: #eee; line-height: 20px; color: #333; }
.tree { flex: 1; min-height: 0; padding-left: 1px; overflow: hidden; color: #000; }
.tree li { display: flex; height: 20px; white-space: nowrap; }
.tree li > span { margin-left: 4px; padding: 0 3px; line-height: 20px; }
.tree li > span.root { margin-left: 3px; }
.tree li > span.selected { background: #dedede; }
svg.root { margin: 2px 0 0 1px; }
.cell { position: relative; flex: none; width: 20px; height: 20px; }
.cell.v { background: repeating-linear-gradient(#999 0 1px, #fff 1px 2px) 9px 0 / 1px 20px no-repeat; }
.cell.u { background: repeating-linear-gradient(#999 0 1px, #fff 1px 2px) 9px 0 / 1px 10px no-repeat; }
.cell.h::after { content: ""; position: absolute; left: 9px; top: 10px; width: 15px; height: 1px; background: repeating-linear-gradient(90deg, #999 0 1px, transparent 1px 2px); }
.cell.box::before { content: ""; position: absolute; z-index: 1; left: 5px; top: 6px; width: 9px; height: 9px; border: 1px solid #8a8a8a; background: linear-gradient(#445a9a, #445a9a) 1px 3px / 5px 1px no-repeat #fff; }
.cell.plus::before { background: linear-gradient(#445a9a, #445a9a) 1px 3px / 5px 1px no-repeat, linear-gradient(#445a9a, #445a9a) 3px 1px / 1px 5px no-repeat, #fff; }
.hscroll { display: flex; flex: none; align-items: center; height: 17px; padding: 0 3px 0 6px; gap: 5px; background: #f0f0f0; margin-bottom: 1px; }
.hscroll .thumb { flex: 1; height: 15px; background: #cdcdcd; }

.status { display: flex; flex: none; align-items: center; height: 27px; }
.sets { display: flex; flex: 1; align-items: center; gap: 8px; padding-left: 780px; }
.field { position: relative; flex: none; width: 204px; height: 18px; background: #fff; color: #777; }
.field select { width: 100%; height: 18px; padding-left: 2px; }
.field svg { position: absolute; right: 3px; top: 7px; }
.count { width: 25px; margin-left: -3px; }
.picks { display: flex; gap: 10px; }
.total { width: 54px; }
.edge { flex: none; height: 9px; background: #000; }

/* Dialog */
.dialog { position: absolute; left: 217px; top: 156px; width: 989px; border: 1px solid #6a6a6a; background: #f0f0f0; color: #000; box-shadow: 0 4px 16px rgba(0, 0, 0, .4); }
.dlg-title { display: flex; align-items: center; justify-content: space-between; height: 30px; padding: 0 9px 0 8px; background: #fff; }
.tabs { display: flex; align-items: flex-end; height: 33px; padding-left: 9px; }
.tabs button { height: 21px; padding: 0 6px 0 5px; border: 1px solid #d9d9d9; border-width: 1px 1px 0 0; line-height: 18px; white-space: nowrap; }
.tabs button:first-child { border-left-width: 1px; }
.tabs .current { position: relative; height: 25px; margin-bottom: -1px; padding: 0 7px 0 6px; background: #fff; line-height: 22px; }
.pane { margin: 0 9px 0 7px; padding: 40px 15px 60px 16px; border: 1px solid #dcdcdc; background: #fff; }
.list { height: 462px; border: 1px solid #dcdcdc; border-top-color: #666; border-left-color: #666; }
.list table { width: 100%; table-layout: fixed; border-collapse: separate; border-spacing: 0; }
.c-name { width: 210px; }
.c-flag { width: 94px; }
.c-proj { width: 103px; }
.c-cut { width: 104px; }
.list tr { height: 20px; }
.list th { height: 20px; padding: 0; border: solid #666; border-width: 0 1px 1px 0; background: #f0f0f0; font-weight: 400; line-height: 16px; }
.list td { height: 20px; padding: 0; border: solid #999; border-width: 0 1px 1px 0; line-height: 16px; }
.list th.tail { border-right: 0; }
.list td.tail { border: 0; }
.list td.name { padding-left: 6px; border-right-color: #888; }
.list td.flag { padding-right: 2px; }
.flag input { appearance: none; display: block; width: 11px; height: 11px; margin: 0 auto; border: 1px solid #777; background: #fff; }
.flag input:checked::before { content: ""; display: block; width: 9px; height: 9px; background: #000; clip-path: polygon(10% 40%, 35% 65%, 90% 5%, 90% 40%, 35% 95%, 10% 70%); }
.pattern span { display: block; width: 51px; height: 19px; border-right: 2px solid #b4b4b4; text-align: center; line-height: 20px; }
.list td.cut { border-color: transparent #999 transparent transparent; border-right-style: dotted; background: repeating-conic-gradient(#929292 0 25%, #dcdcdc 0 50%) 0 0 / 2px 2px; }
.btn { height: 30px; border: 1px solid #adadad; background: #e1e1e1; white-space: nowrap; }
.btn:disabled { border-color: #bfbfbf; background: #ccc; color: #8c8c8c; }
.btn.primary { border: 2px solid #2b7bbd; }
.row { display: flex; gap: 9px; margin-top: 10px; }
.row .btn { width: 103px; }
.note { display: flex; align-items: flex-start; justify-content: space-between; width: 438px; height: 89px; margin: 20px 0 0 3px; padding: 26px 21px 0 22px; border: 1px solid #dcdcdc; }
.note p { line-height: 14px; }
.note .btn { width: 126px; }
.foot { display: flex; justify-content: flex-end; gap: 9px; padding: 10px 7px 10px; }
.foot .btn { width: 86px; height: 28px; }
.corner { position: absolute; right: 1px; bottom: 1px; }
.pointer { position: absolute; left: 353px; top: 390px; }
</style>
